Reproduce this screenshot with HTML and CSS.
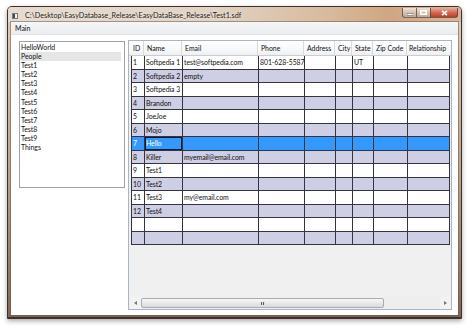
FILE: index.html
```html
<!DOCTYPE html>
<html lang="en">
<head>
<meta charset="utf-8">
<title>EasyDatabase</title>
<link rel="stylesheet" href="styles.css">
</head>
<body>
<div class="window">
  <div class="titlebar">
    <svg class="app-icon" width="6" height="6" viewBox="0 0 6 6"><rect x="0.5" y="0.5" width="5" height="5" fill="#f4f4f4" stroke="#7a7a7a"/><rect x="1" y="1" width="2" height="4" fill="#3b4a6a"/></svg>
    <span class="title">C:\Desktop\EasyDatabase_Release\EasyDataBase_Release\Test1.sdf</span>
    <div class="caption">
      <span class="cbtn cmin"><svg width="6" height="3" viewBox="0 0 6 3"><rect x="0" y="0.5" width="6" height="2" fill="#fff" stroke="#555" stroke-width="0.5"/></svg></span>
      <span class="cbtn cmax"><svg width="7" height="5" viewBox="0 0 7 5"><rect x="0.75" y="0.75" width="5.5" height="3.5" fill="none" stroke="#fff" stroke-width="1.5"/></svg></span>
      <span class="cbtn cclose"><svg width="7" height="6" viewBox="0 0 7 6"><path d="M1 0.8 L6 5.2 M6 0.8 L1 5.2" stroke="#fff" stroke-width="1.6"/></svg></span>
    </div>
  </div>
  <div class="client">
    <div class="menubar"><span class="menu-item">Main</span></div>
    <div class="content">
      <ul class="listbox">
        <li>HelloWorld</li>
        <li class="selected">People</li>
        <li>Test1</li>
        <li>Test2</li>
        <li>Test3</li>
        <li>Test4</li>
        <li>Test5</li>
        <li>Test6</li>
        <li>Test7</li>
        <li>Test8</li>
        <li>Test9</li>
        <li>Things</li>
      </ul>
      <div class="datagrid">
        <div class="row header">
          <div class="rh"></div>
          <div class="hc">ID</div>
          <div class="hc">Name</div>
          <div class="hc">Email</div>
          <div class="hc">Phone</div>
          <div class="hc">Address</div>
          <div class="hc">City</div>
          <div class="hc">State</div>
          <div class="hc">Zip Code</div>
          <div class="hc">Relationship</div>
        </div>
        <div class="row"><div class="rh"></div><div class="c">1</div><div class="c">Softpedia 1</div><div class="c">test@softpedia.com</div><div class="c">801-628-5587</div><div class="c"></div><div class="c"></div><div class="c">UT</div><div class="c"></div><div class="c"></div></div>
        <div class="row alt"><div class="rh"></div><div class="c">2</div><div class="c">Softpedia 2</div><div class="c">empty</div><div class="c"></div><div class="c"></div><div class="c"></div><div class="c"></div><div class="c"></div><div class="c"></div></div>
        <div class="row"><div class="rh"></div><div class="c">3</div><div class="c">Softpedia 3</div><div class="c"></div><div class="c"></div><div class="c"></div><div class="c"></div><div class="c"></div><div class="c"></div><div class="c"></div></div>
        <div class="row alt"><div class="rh"></div><div class="c">4</div><div class="c">Brandon</div><div class="c"></div><div class="c"></div><div class="c"></div><div class="c"></div><div class="c"></div><div class="c"></div><div class="c"></div></div>
        <div class="row"><div class="rh"></div><div class="c">5</div><div class="c">JoeJoe</div><div class="c"></div><div class="c"></div><div class="c"></div><div class="c"></div><div class="c"></div><div class="c"></div><div class="c"></div></div>
        <div class="row alt"><div class="rh"></div><div class="c">6</div><div class="c">Mojo</div><div class="c"></div><div class="c"></div><div class="c"></div><div class="c"></div><div class="c"></div><div class="c"></div><div class="c"></div></div>
        <div class="row sel"><div class="rh"></div><div class="c">7</div><div class="c focus">Hello</div><div class="c"></div><div class="c"></div><div class="c"></div><div class="c"></div><div class="c"></div><div class="c"></div><div class="c"></div></div>
        <div class="row alt"><div class="rh"></div><div class="c">8</div><div class="c">Killer</div><div class="c">myemail@email.com</div><div class="c"></div><div class="c"></div><div class="c"></div><div class="c"></div><div class="c"></div><div class="c"></div></div>
        <div class="row"><div class="rh"></div><div class="c">9</div><div class="c">Test1</div><div class="c"></div><div class="c"></div><div class="c"></div><div class="c"></div><div class="c"></div><div class="c"></div><div class="c"></div></div>
        <div class="row alt"><div class="rh"></div><div class="c">10</div><div class="c">Test2</div><div class="c"></div><div class="c"></div><div class="c"></div><div class="c"></div><div class="c"></div><div class="c"></div><div class="c"></div></div>
        <div class="row"><div class="rh"></div><div class="c">11</div><div class="c">Test3</div><div class="c">my@email.com</div><div class="c"></div><div class="c"></div><div class="c"></div><div class="c"></div><div class="c"></div><div class="c"></div></div>
        <div class="row alt"><div class="rh"></div><div class="c">12</div><div class="c">Test4</div><div class="c"></div><div class="c"></div><div class="c"></div><div class="c"></div><div class="c"></div><div class="c"></div><div class="c"></div></div>
        <div class="row"><div class="rh"></div><div class="c"></div><div class="c"></div><div class="c"></div><div class="c"></div><div class="c"></div><div class="c"></div><div class="c"></div><div class="c"></div><div class="c"></div></div>
        <div class="row alt"><div class="rh"></div><div class="c"></div><div class="c"></div><div class="c"></div><div class="c"></div><div class="c"></div><div class="c"></div><div class="c"></div><div class="c"></div><div class="c"></div></div>
        <div class="grid-fill"></div>
        <div class="hscroll">
          <span class="sarrow"><svg width="3" height="4" viewBox="0 0 3 4"><path d="M3 0 L0 2 L3 4 Z" fill="#777"/></svg></span>
          <span class="track"><span class="thumb"><span class="grip"></span></span></span>
          <span class="sarrow"><svg width="3" height="4" viewBox="0 0 3 4"><path d="M0 0 L3 2 L0 4 Z" fill="#777"/></svg></span>
        </div>
      </div>
    </div>
  </div>
</div>
</body>
</html>
```
FILE: styles.css
```css
html, body {
  margin: 0;
  padding: 0;
  background: #ffffff;
  width: 474px;
  height: 332px;
  overflow: hidden;
  font-family: Lato, "Open Sans", "Liberation Sans", sans-serif;
  font-size: 6.9px;
  color: #111;
}

.window {
  box-sizing: border-box;
  margin: 6px 0 0 7px;
  width: 455px;
  height: 313px;
  border: 1px solid #3e3129;
  border-bottom-width: 2px;
  border-radius: 5px 5px 1px 1px;
  padding: 0 3px 2px 3px;
  display: flex;
  flex-direction: column;
  background: linear-gradient(180deg, #e4d7ca 0px, #dccab8 15px, #b9a08a 55%, #7e6656 100%);
  box-shadow: 0 2px 5px rgba(0,0,0,0.35), inset 0 1px 0 #f6f1ec;
}

.titlebar {
  height: 15px;
  display: flex;
  align-items: center;
  background: linear-gradient(90deg, #e6dbd0 0%, #e2d3c4 45%, #d8bb9f 70%, #cfa682 84%, #d4b79c 100%);
  margin: 0 -3px;
  padding: 0 3px 0 4px;
  border-radius: 4px 4px 0 0;
}

.app-icon {
  display: block;
  margin-top: 2px;
}

.title {
  margin-left: 7px;
  margin-top: 1px;
  font-size: 7.2px;
  color: #1a1a1a;
  text-shadow: 0 0 3px rgba(255,255,255,0.8);
  white-space: nowrap;
  flex: 1;
}

.caption {
  align-self: flex-start;
  display: flex;
  margin-top: 1px;
  height: 10px;
}

.cbtn {
  box-sizing: border-box;
  height: 10px;
  display: flex;
  align-items: center;
  justify-content: center;
  border: 1px solid rgba(80,62,52,0.75);
  border-top: none;
}

.cmin, .cmax {
  width: 14px;
  background: linear-gradient(180deg, #eee2d8 0%, #d6c2b2 50%, #c2a892 100%);
  border-right: none;
}

.cmin {
  border-bottom-left-radius: 3px;
}

.cmin svg {
  margin-top: 3px;
}

.cclose {
  width: 28px;
  background: linear-gradient(180deg, #e9a89a 0%, #d56a56 50%, #c43b22 100%);
  border-bottom-right-radius: 3px;
}

.client {
  flex: 1;
  display: flex;
  flex-direction: column;
  background: #ffffff;
  outline: 1px solid rgba(110,90,75,0.55);
}

.menubar {
  height: 13px;
  display: flex;
  align-items: center;
  background: linear-gradient(180deg, #f5f6f7 0%, #eaecef 100%);
  border-bottom: 1px solid #e0e2e6;
  box-sizing: border-box;
}

.menu-item {
  padding-left: 4px;
  font-size: 7px;
}

.content {
  flex: 1;
  display: flex;
  gap: 3px;
  padding: 5px 6px 5px 8px;
}

.listbox {
  box-sizing: border-box;
  list-style: none;
  margin: 1px 0 0 0;
  padding: 1px 0 0 0;
  width: 106px;
  height: 147px;
  border: 1px solid #9ea3ab;
  background: #fff;
}

.listbox li {
  height: 9.1px;
  line-height: 9.1px;
  padding-left: 1px;
  margin-right: 3px;
  white-space: nowrap;
}

.listbox li.selected {
  background: #e6e6e6;
}

.datagrid {
  box-sizing: border-box;
  width: 324px;
  border: 1px solid #a9b5c3;
  background: #f0f0f0;
  display: flex;
  flex-direction: column;
}

.row {
  display: grid;
  grid-template-columns: 2px 13px 38px 76px 46px 31px 17px 21px 34px 43px;
  height: 13.5px;
  flex: none;
}

.row.header {
  height: 15px;
  box-sizing: border-box;
  background: linear-gradient(180deg, #ffffff 0%, #f7f8f9 60%, #eff0f2 100%);
  border-bottom: 1px solid #c9ccd2;
}

.hc {
  border-right: 1px solid #d8dadd;
  padding-left: 2px;
  line-height: 14px;
  white-space: nowrap;
  overflow: hidden;
}

.header .hc:nth-child(n+3) {
  padding-left: 3px;
}

.header .hc:last-child {
  border-right: none;
  padding-left: 2px;
}

.c {
  border-left: 1px solid #34343f;
  border-bottom: 1px solid #34343f;
  background: #ffffff;
  padding-left: 1px;
  line-height: 12.5px;
  white-space: nowrap;
  overflow: hidden;
  letter-spacing: -0.05px;
}

.c:last-child {
  border-right: 1px solid #34343f;
}

.row.alt .c {
  background: #cecee4;
}

.row.sel .c {
  background: #3399ff;
  color: #ffffff;
}

.row.sel .c.focus {
  box-shadow: inset 0 0 0 1px #0d1a33;
}

.grid-fill {
  flex: 1;
}

.hscroll {
  height: 12px;
  margin-left: 1px;
  display: flex;
  align-items: center;
  background: #f3f3f3;
  flex: none;
}

.sarrow {
  width: 11px;
  height: 12px;
  display: flex;
  align-items: center;
  justify-content: center;
}

.track {
  flex: 1;
  height: 12px;
  display: flex;
  align-items: center;
  background: #eeeeee;
}

.thumb {
  box-sizing: border-box;
  width: 243px;
  height: 10px;
  border: 1px solid #a8adb4;
  border-radius: 2px;
  background: linear-gradient(180deg, #f7f7f7 0%, #e8e9ea 50%, #d8d9db 100%);
  display: flex;
  align-items: center;
  justify-content: center;
}

.grip {
  width: 4px;
  height: 3px;
  background: repeating-linear-gradient(90deg, #5b5f66 0 1px, #d9dbde 1px 2px);
}
```
